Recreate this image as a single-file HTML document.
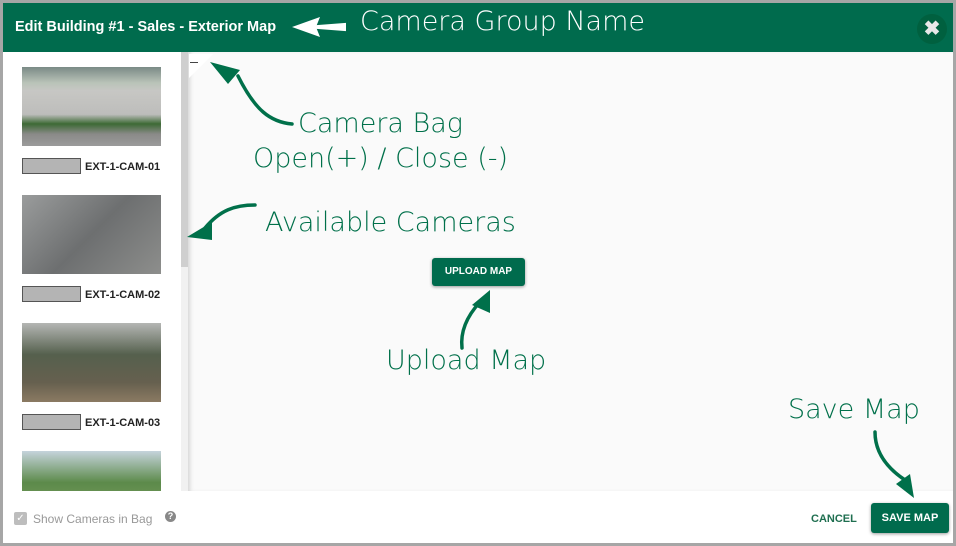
<!DOCTYPE html>
<html><head><style>
*{margin:0;padding:0;box-sizing:border-box}
body{width:956px;height:546px;background:#a6a6a6;position:relative;overflow:hidden;font-family:"Liberation Sans",sans-serif}
.win{position:absolute;left:3px;top:3px;width:950px;height:540px;background:#fff}
.hdr{position:absolute;left:0;top:0;width:950px;height:49px;background:#006b4d}
.ttl{position:absolute;left:12px;top:16px;color:#fff;font-size:14.5px;font-weight:bold}
.close{position:absolute;left:914px;top:11px;width:30px;height:30px;border-radius:50%;background:#00603f;color:#e8e8e8;font-size:20px;font-weight:bold;text-align:center;line-height:30px}
.side{position:absolute;left:0;top:49px;width:178px;height:439px;background:#fff;overflow:hidden}
.sb{position:absolute;left:178px;top:49px;width:7px;height:439px;background:#f1f1f1}
.sbt{position:absolute;left:178px;top:49px;width:7px;height:215px;background:#cfcfcf}
.map{position:absolute;left:185px;top:49px;width:765px;height:439px;background:#fafafa;box-shadow:inset 4px 0 4px -2px rgba(0,0,0,.15)}
.th{position:absolute;left:19px;width:139px;height:79px}
.lb{position:absolute;left:19px;width:59px;height:16px;background:#b4b4b4;border:1px solid #555}
.lt{position:absolute;left:82px;font-size:11px;font-weight:bold;color:#222}
.ann{position:absolute;color:#00704a;font-size:27px;line-height:30px;font-family:"DejaVu Sans","Liberation Sans",sans-serif;font-weight:300;white-space:nowrap}
.btn{position:absolute;background:#006b4d;color:#fff;font-weight:bold;font-size:11px;border-radius:3px;text-align:center;box-shadow:0 1px 3px rgba(0,0,0,.4)}
</style></head><body>
<div class="win">
<div class="hdr"><div class="ttl">Edit Building #1 - Sales - Exterior Map</div><div class="close">✖</div></div>
<div class="side">
<div class="th" style="top:15px;background:linear-gradient(#7a8a86 0,#b9c3b8 20%,#c7c7c4 30%,#bdbdbb 60%,#3d6a35 72%,#8a8a88 85%,#9b9b9b)"></div>
<div class="lb" style="top:106px"></div><div class="lt" style="top:109px">EXT-1-CAM-01</div>
<div class="th" style="top:143px;background:linear-gradient(135deg,#9a9c9c,#6d6f70 50%,#8d8e8c)"></div>
<div class="lb" style="top:234px"></div><div class="lt" style="top:237px">EXT-1-CAM-02</div>
<div class="th" style="top:271px;background:linear-gradient(#b4b6b4,#55604d 40%,#66604f 75%,#8b7a62)"></div>
<div class="lb" style="top:362px"></div><div class="lt" style="top:365px">EXT-1-CAM-03</div>
<div class="th" style="top:399px;background:linear-gradient(#c5d3dc,#5c8a4a 40%,#8ea86c)"></div>
</div>
<div class="sb"></div><div class="sbt"></div>
<div class="map"></div>
<div style="position:absolute;left:186px;top:51px;width:0;height:0;border-top:24px solid #fff;border-right:24px solid transparent"></div>
<div style="position:absolute;left:187px;top:59px;width:8px;height:1px;background:#444"></div>
<div class="btn" style="left:429px;top:255px;width:93px;height:28px;line-height:28px;font-size:10px">UPLOAD MAP</div>
<div class="btn" style="left:868px;top:500px;width:78px;height:30px;line-height:30px">SAVE MAP</div>
<div style="position:absolute;left:808px;top:510px;font-size:11px;font-weight:bold;color:#1f6f50">CANCEL</div>
<div style="position:absolute;left:11px;top:509px;width:13px;height:13px;background:#bdbdbd;border-radius:2px;color:#fff;font-size:10px;text-align:center;line-height:13px">✓</div>
<div style="position:absolute;left:30px;top:509px;font-size:12px;color:#999">Show Cameras in Bag</div>
<div style="position:absolute;left:162px;top:508px;width:11px;height:11px;border-radius:50%;background:#888;color:#fff;font-size:9px;font-weight:bold;text-align:center;line-height:11px">?</div>
</div>
<div class="ann" style="left:360px;top:7px;color:#fff">Camera Group Name</div>
<div class="ann" style="left:298px;top:109px">Camera Bag</div>
<div class="ann" style="left:253px;top:144px">Open(+) / Close (-)</div>
<div class="ann" style="left:265px;top:208px">Available Cameras</div>
<div class="ann" style="left:386px;top:346px">Upload Map</div>
<div class="ann" style="left:788px;top:395px">Save Map</div>
<svg style="position:absolute;left:0;top:0" width="956" height="546">
<g fill="none" stroke="#00704a" stroke-width="3.5" stroke-linecap="round">
<path d="M292 124 C270 122 255 110 238 76"/>
<path d="M255 205 C235 205 220 210 205 228"/>
<path d="M462 348 C460 330 468 315 480 302"/>
<path d="M875 432 C875 455 890 470 905 480"/>
</g>
<g fill="#00704a"><path d="M210 62 L240 70 L228 84 Z"/><path d="M187 237 L212 222 L212 240 Z"/><path d="M490 290 L490 313 L472 305 Z"/><path d="M914 498 L896 484 L910 474 Z"/></g>
<g fill="#fff"><path d="M305 27 L345 24 L345 30 Z" stroke="#fff" stroke-width="2"/><path d="M292 27 L320 17 L316 27 L320 37 Z"/></g>
</svg>
</body></html>
